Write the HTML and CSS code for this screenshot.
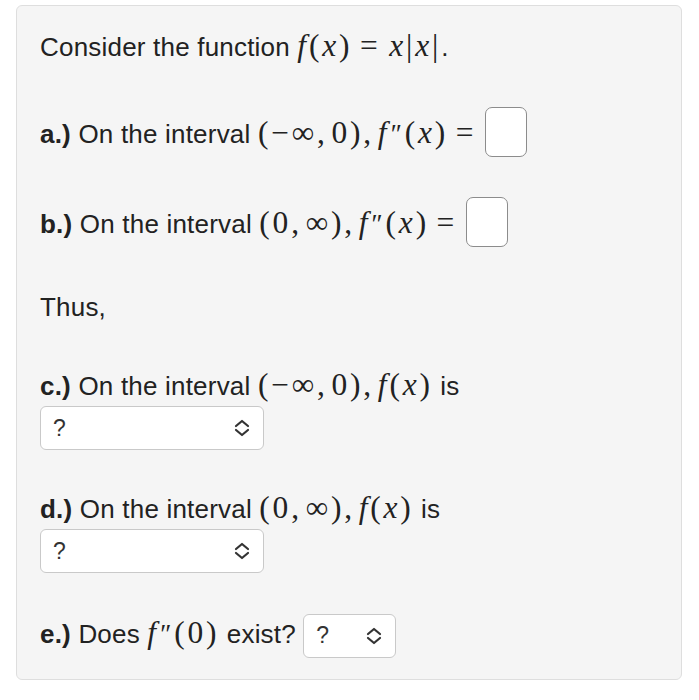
FILE: index.html
```html
<!DOCTYPE html>
<html lang="en">
<head>
    <meta charset="UTF-8">
    <title>Problem</title>
    <link rel="stylesheet" href="styles.css">
</head>
<body>

<div class="card">
    <p class="line first">Consider the function <span class="math"><i>f</i>(<i>x</i>)<span class="rel">=</span><i>x</i>|<i>x</i>|</span>.</p>

    <p class="line tall row-a"><b>a.)</b> On the interval <span class="math">(−∞,<span class="punct"></span>0),<span class="punct"></span><i>f</i><span class="prime">″</span>(<i>x</i>)<span class="rel">=</span></span><span class="answer"></span></p>

    <p class="line tall row-b"><b>b.)</b> On the interval <span class="math">(0,<span class="punct"></span>∞),<span class="punct"></span><i>f</i><span class="prime">″</span>(<i>x</i>)<span class="rel">=</span></span><span class="answer"></span></p>

    <p class="line thus">Thus,</p>

    <p class="line row-c"><b>c.)</b> On the interval <span class="math">(−∞,<span class="punct"></span>0),<span class="punct"></span><i>f</i>(<i>x</i>)</span> is</p>
    <div class="select wide">
        <span>?</span>
        <svg width="18" height="20" viewBox="0 0 18 20"><path d="M3 8 L9 3 L15 8 M3 12 L9 17 L15 12" /></svg>
    </div>

    <p class="line row-d"><b>d.)</b> On the interval <span class="math">(0,<span class="punct"></span>∞),<span class="punct"></span><i>f</i>(<i>x</i>)</span> is</p>
    <div class="select wide">
        <span>?</span>
        <svg width="18" height="20" viewBox="0 0 18 20"><path d="M3 8 L9 3 L15 8 M3 12 L9 17 L15 12" /></svg>
    </div>

    <p class="line tall row-e"><b>e.)</b> Does <span class="math"><i>f</i><span class="prime">″</span>(0)</span> exist? <span class="select small"><span>?</span><svg width="18" height="20" viewBox="0 0 18 20"><path d="M3 8 L9 3 L15 8 M3 12 L9 17 L15 12" /></svg></span></p>
</div>

</body>
</html>
```

FILE: styles.css
```css
body {
    margin: 5px 0 0 16px;
    font-family: "Liberation Sans", Arial, sans-serif;
    color: #222;
    background-color: #fff;
}
.card {
    width: 666px;
    box-sizing: border-box;
    border: 1px solid #dedede;
    border-radius: 6px;
    background-color: #f5f5f5;
    padding: 21px 23px 17px;
}
.line {
    margin: 0;
    font-size: 26px;
    line-height: 40px;
    letter-spacing: 0.2px;
}
.line.tall {
    line-height: 56px;
}
.row-a { margin-top: 39px; }
.row-b { margin-top: 34px; }
.thus { margin-top: 35px; }
.row-c { margin-top: 39px; }
.row-d { margin-top: 39px; }
.row-e { margin-top: 33px; }

.math {
    font-family: "Liberation Serif", "DejaVu Serif", serif;
    font-size: 1.21em;
    line-height: 0;
    letter-spacing: 0.09em;
}
.math i {
    font-style: italic;
}
.math .rel {
    margin: 0 0.28em 0 0.24em;
}
.math .punct {
    margin-right: 0.12em;
}
.math .prime {
    font-size: 0.85em;
    margin-left: 0.05em;
}
.answer {
    display: inline-block;
    width: 42px;
    height: 50px;
    box-sizing: border-box;
    margin-left: 0;
    border: 1.5px solid #8c8c8c;
    border-radius: 7px;
    background-color: #fff;
    vertical-align: -14px;
}
.select {
    display: flex;
    align-items: center;
    justify-content: space-between;
    height: 44px;
    box-sizing: border-box;
    padding: 0 12px;
    border: 1px solid #c9c9c9;
    border-radius: 6px;
    background-color: #fff;
    font-size: 23px;
    line-height: normal;
    letter-spacing: 0;
    color: #333;
}
.select.wide {
    width: 224px;
}
.select.small {
    display: inline-flex;
    width: 93px;
}
.select svg path {
    fill: none;
    stroke: #333;
    stroke-width: 2.2;
    stroke-linecap: round;
    stroke-linejoin: round;
}
```
